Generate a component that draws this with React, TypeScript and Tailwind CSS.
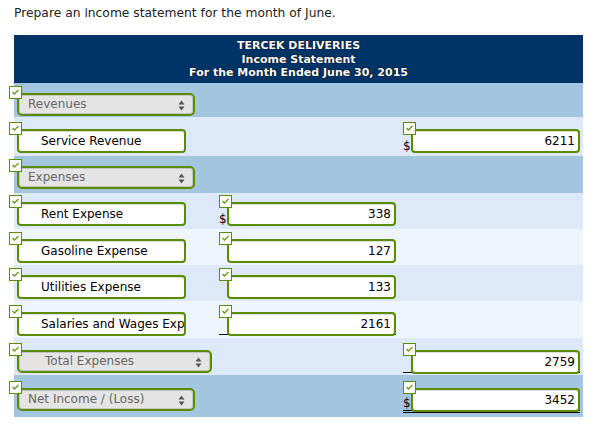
import React from "react";

function Check() {
  return (
    <div className="absolute left-[-8px] top-[-7px] z-10 h-[13px] w-[13px] border border-[#5b8c00] bg-white">
      <svg width="11" height="11" viewBox="0 0 11 11" className="block">
        <path d="M2.5 5 L4.5 7 L8.5 3" stroke="#6a9a1a" strokeWidth="1.4" fill="none" />
      </svg>
    </div>
  );
}

function Arrows() {
  return (
    <svg width="7" height="11" viewBox="0 0 7 11" className="absolute right-[8px] top-[5px]">
      <path d="M3.5 0.5 L6.5 4.5 L0.5 4.5 Z" fill="#555" />
      <path d="M3.5 10.5 L6.5 6.5 L0.5 6.5 Z" fill="#555" />
    </svg>
  );
}

function Sel({ text, w, pl }: { text: string; w: string; pl: string }) {
  return (
    <div className={`relative ${w}`}>
      <Check />
      <div
        className={`relative h-[23px] ${w} rounded-[5px] border-2 border-[#5b8c00] bg-[#e4e4e4] shadow-[inset_0_0_0_1px_#c4c4c4] ${pl} text-[12px] leading-[19px] text-[#666]`}
      >
        {text}
        <Arrows />
      </div>
    </div>
  );
}

function LabelBox({ text }: { text: string }) {
  return (
    <div className="relative w-[169px]">
      <Check />
      <div className="h-[24px] w-[169px] overflow-hidden whitespace-nowrap rounded-[4px] border-2 border-[#5b8c00] bg-white pl-[22px] text-[12px] leading-[20px] text-black shadow-[inset_0_1px_0_#ddd]">
        {text}
      </div>
    </div>
  );
}

function Num({ v, dollar, under }: { v: string; dollar?: boolean; under?: "single" | "double" }) {
  const ub =
    under === "single"
      ? "border-b border-black"
      : under === "double"
      ? "border-b-[3px] border-double border-black"
      : "";
  return (
    <div className={`flex w-[177px] items-end ${ub}`}>
      <div className="w-[8px] text-[12px] leading-[14px] text-black">{dollar ? "$" : ""}</div>
      <div className={`relative w-[169px] ${under ? "mb-[-2px]" : ""}`}>
        <Check />
        <div className="h-[24px] w-[169px] rounded-[4px] border-2 border-[#5b8c00] bg-white pr-[3px] text-right text-[12px] leading-[20px] text-black shadow-[inset_0_1px_0_#ddd]">
          {v}
        </div>
      </div>
    </div>
  );
}

function Row({
  h,
  pt,
  bg,
  left,
  mid,
  right,
}: {
  h: string;
  pt: string;
  bg: string;
  left: React.ReactNode;
  mid?: React.ReactNode;
  right?: React.ReactNode;
}) {
  return (
    <div className={`flex ${h} ${pt} ${bg} pl-[3px]`}>
      <div className="w-[202px]">{left}</div>
      <div className="w-[184px]">{mid}</div>
      <div className="flex-1">{right}</div>
    </div>
  );
}

export default function App() {
  const blue = "bg-[#a4c5de]";
  const l1 = "bg-[#dde9f8]";
  const l2 = "bg-[#eef5fe]";
  return (
    <div className="h-[430px] w-[595px] bg-white font-['DejaVu_Sans',sans-serif]">
      <div className="pl-[14px] pt-[5px] text-[12.3px] leading-[16px] text-[#222]">
        Prepare an income statement for the month of June.
      </div>
      <div className="ml-[14px] mt-[14px] w-[569px]">
        <div className="flex h-[48px] flex-col items-center bg-[#003366] pt-[4px] text-[11px] font-bold leading-[13.5px] text-white [text-shadow:0_0_1px_#000,0_0_1px_#000]">
          <div>TERCEK DELIVERIES</div>
          <div>Income Statement</div>
          <div>For the Month Ended June 30, 2015</div>
        </div>
        <Row h="h-[34px]" pt="pt-[10px]" bg={blue} left={<Sel text="Revenues" w="w-[178px]" pl="pl-[9px]" />} />
        <Row
          h="h-[39px]"
          pt="pt-[12px]"
          bg={l1}
          left={<LabelBox text="Service Revenue" />}
          right={<Num v="6211" dollar />}
        />
        <Row h="h-[37px]" pt="pt-[10px]" bg={blue} left={<Sel text="Expenses" w="w-[178px]" pl="pl-[9px]" />} />
        <Row
          h="h-[36px]"
          pt="pt-[9px]"
          bg={l1}
          left={<LabelBox text="Rent Expense" />}
          mid={<Num v="338" dollar />}
        />
        <Row
          h="h-[36px]"
          pt="pt-[10px]"
          bg={l2}
          left={<LabelBox text="Gasoline Expense" />}
          mid={<Num v="127" />}
        />
        <Row
          h="h-[36px]"
          pt="pt-[10px]"
          bg={l1}
          left={<LabelBox text="Utilities Expense" />}
          mid={<Num v="133" />}
        />
        <Row
          h="h-[37px]"
          pt="pt-[11px]"
          bg={l2}
          left={<LabelBox text="Salaries and Wages Expense" />}
          mid={<Num v="2161" under="single" />}
        />
        <Row
          h="h-[37px]"
          pt="pt-[12px]"
          bg={l1}
          left={<Sel text="Total Expenses" w="w-[195px]" pl="pl-[26px]" />}
          right={<Num v="2759" under="single" />}
        />
        <Row
          h="h-[42px]"
          pt="pt-[13px]"
          bg={blue}
          left={<Sel text="Net Income / (Loss)" w="w-[178px]" pl="pl-[9px]" />}
          right={<Num v="3452" dollar under="double" />}
        />
      </div>
    </div>
  );
}
